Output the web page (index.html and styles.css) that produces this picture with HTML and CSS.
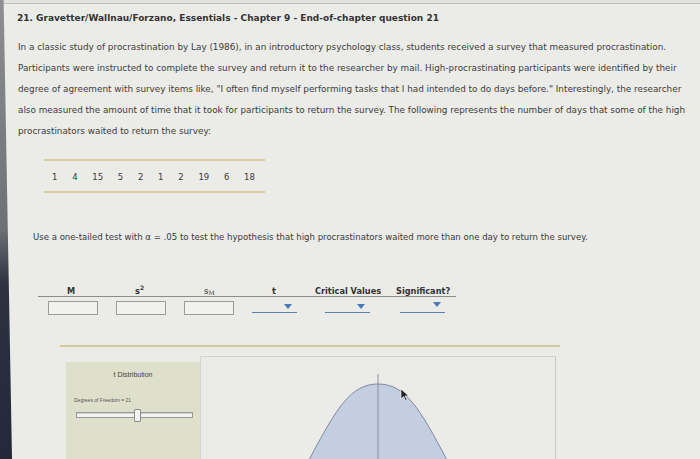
FILE: index.html
```html
<!DOCTYPE html>
<html>
<head>
<meta charset="utf-8">
<link rel="stylesheet" href="styles.css">
</head>
<body>
<div class="screen">
  <div class="bezel"></div>
  <div class="page">
    <div class="topstrip"></div>
    <h1 class="title">21. Gravetter/Wallnau/Forzano, Essentials - Chapter 9 - End-of-chapter question 21</h1>
    <p class="prose">In a classic study of procrastination by Lay (1986), in an introductory psychology class, students received a survey that measured procrastination. Participants were instructed to complete the survey and return it to the researcher by mail. High-procrastinating participants were identified by their degree of agreement with survey items like, "I often find myself performing tasks that I had intended to do days before." Interestingly, the researcher also measured the amount of time that it took for participants to return the survey. The following represents the number of days that some of the high procrastinators waited to return the survey:</p>
    <div class="data">
      <span>1</span><span>4</span><span>15</span><span>5</span><span>2</span><span>1</span><span>2</span><span>19</span><span>6</span><span>18</span>
    </div>
    <p class="instr">Use a one-tailed test with α = .05 to test the hypothesis that high procrastinators waited more than one day to return the survey.</p>
    <div class="answers">
      <div class="heads">
        <span class="h hm">M</span>
        <span class="h hs2">s<sup>2</sup></span>
        <span class="h hsm">s<sub>M</sub></span>
        <span class="h ht">t</span>
        <span class="h hcv">Critical Values</span>
        <span class="h hsig">Significant?</span>
      </div>
      <div class="inputs">
        <span class="box"></span>
        <span class="box"></span>
        <span class="box"></span>
        <span class="dd dd1"><i class="tri"></i></span>
        <span class="dd dd2"><i class="tri"></i></span>
        <span class="dd dd3"><i class="tri"></i></span>
      </div>
    </div>
    <div class="sep"></div>
    <div class="tool">
      <div class="controls">
        <div class="ctitle">t Distribution</div>
        <div class="dof">Degrees of Freedom = 21</div>
        <div class="slider"><span class="thumb"></span></div>
      </div>
      <div class="graph">
        <svg width="356" height="103" viewBox="0 0 356 103">
          <path d="M108 103 C 136 50, 150 27, 177 27 C 204 27, 218 50, 246 103 Z" fill="#c3cfe0" stroke="#7e8aa0" stroke-width="1"/>
          <line x1="177" y1="17" x2="177" y2="103" stroke="#8a8f98" stroke-width="1"/>
          <path d="M200 32 L200 42 L202.5 39.5 L204.5 43.5 L206 42.8 L204 39 L207.5 38.8 Z" fill="#222" stroke="#fff" stroke-width="0.6"/>
        </svg>
      </div>
    </div>
  </div>
</div>
</body>
</html>
```
FILE: styles.css
```css
html, body {
  margin: 0;
  padding: 0;
  width: 700px;
  height: 459px;
  overflow: hidden;
  background: #ebebe8;
}
.screen {
  display: flex;
  width: 700px;
  height: 459px;
  overflow: hidden;
  font-family: "DejaVu Sans", Verdana, sans-serif;
  color: #3a3a3a;
}
.bezel {
  flex: 0 0 12px;
  background: linear-gradient(to bottom, #8d8f92 0%, #6d7075 50%, #2c3240 62%, #23293a 100%);
  clip-path: polygon(0 0, 30% 0, 100% 100%, 0 100%);
}
.page {
  flex: 1;
  margin-left: -12px;
  display: flex;
  flex-direction: column;
  overflow: hidden;
}
.page > * { flex-shrink: 0; }
.topstrip {
  height: 3px;
  border-bottom: 1px solid #bfbfbc;
  background: #e2e2df;
}
.title {
  margin: 8px 0 0 17px;
  font-size: 9px;
  font-weight: bold;
  color: #333;
  line-height: 12px;
}
.prose {
  margin: 13px 0 0 18px;
  width: 672px;
  font-size: 8.83px;
  line-height: 21px;
  color: #3c3c3c;
}
.data {
  margin: 17px 0 0 44px;
  width: 221px;
  border-top: 2px solid #d4cea0;
  border-bottom: 2px solid #d4cea0;
  display: flex;
  justify-content: space-between;
  padding: 10px 10px 8px 8px;
  box-sizing: border-box;
  font-size: 8.5px;
  line-height: 12px;
}
.instr {
  margin: 38px 0 0 33px;
  font-size: 8.55px;
  line-height: 12px;
}
.answers {
  margin: 39px 0 0 38px;
  width: 418px;
}
.heads {
  position: relative;
  height: 14px;
  border-bottom: 1px solid #8b8b8b;
  font-size: 8.2px;
  font-weight: bold;
  color: #333;
}
.h { position: absolute; bottom: 0; }
.hm { left: 29px; }
.hs2 { left: 97px; }
.hs2 sup { font-size: 6px; vertical-align: 4px; }
.hsm { left: 166px; font-family: "DejaVu Serif", serif; font-weight: normal; font-size: 8.5px; }
.hsm sub { font-size: 6px; vertical-align: -1px; }
.ht { left: 234px; }
.hcv { left: 277px; }
.hsig { left: 358px; }
.inputs {
  display: flex;
  align-items: flex-end;
  padding: 4px 0 0 10px;
  height: 14px;
}
.box {
  width: 48px;
  height: 12px;
  border: 1px solid #9a9a9a;
  background: #f1f1ef;
  margin-right: 18px;
  flex: none;
}
.dd {
  position: relative;
  width: 45px;
  height: 4px;
  border-bottom: 1px solid #5a7fb0;
  flex: none;
  margin-bottom: 2px;
}
.dd1 { margin-right: 28px; }
.dd2 { margin-right: 30px; }
.tri {
  position: absolute;
  right: 5px;
  top: -4px;
  width: 0;
  height: 0;
  border-left: 4.5px solid transparent;
  border-right: 4.5px solid transparent;
  border-top: 5px solid #4a78b8;
}
.dd3 .tri { right: 4px; top: -6px; }
.sep {
  margin: 30px 0 0 60px;
  width: 500px;
  height: 2px;
  background: #d3cb9a;
}
.tool {
  margin: 9px 0 0 66px;
  display: flex;
  align-items: flex-start;
}
.controls {
  width: 134px;
  margin-top: 6px;
  height: 200px;
  background: #dfe0cc;
  font-family: "Liberation Sans", Arial, sans-serif;
}
.ctitle {
  text-align: center;
  font-size: 7px;
  padding-top: 9px;
  color: #444;
}
.dof {
  font-size: 5px;
  margin: 19px 0 0 8px;
  color: #555;
}
.slider {
  position: relative;
  margin: 9px 0 0 10px;
  width: 115px;
  height: 4px;
  border: 1px solid #9a9a9a;
  background: #f2f2f0;
  box-shadow: inset 0 1px 0 #cfcfcf;
}
.thumb {
  position: absolute;
  left: 57px;
  top: -4px;
  width: 5px;
  height: 11px;
  background: #f4f4f4;
  border: 1px solid #8a8a8a;
  border-radius: 1px;
}
.graph {
  width: 356px;
  height: 200px;
  border: 1px solid #d4d4d0;
  border-right-color: #c8c8c4;
  background: #ebebe8;
  box-sizing: border-box;
}
.graph svg { display: block; }
```
